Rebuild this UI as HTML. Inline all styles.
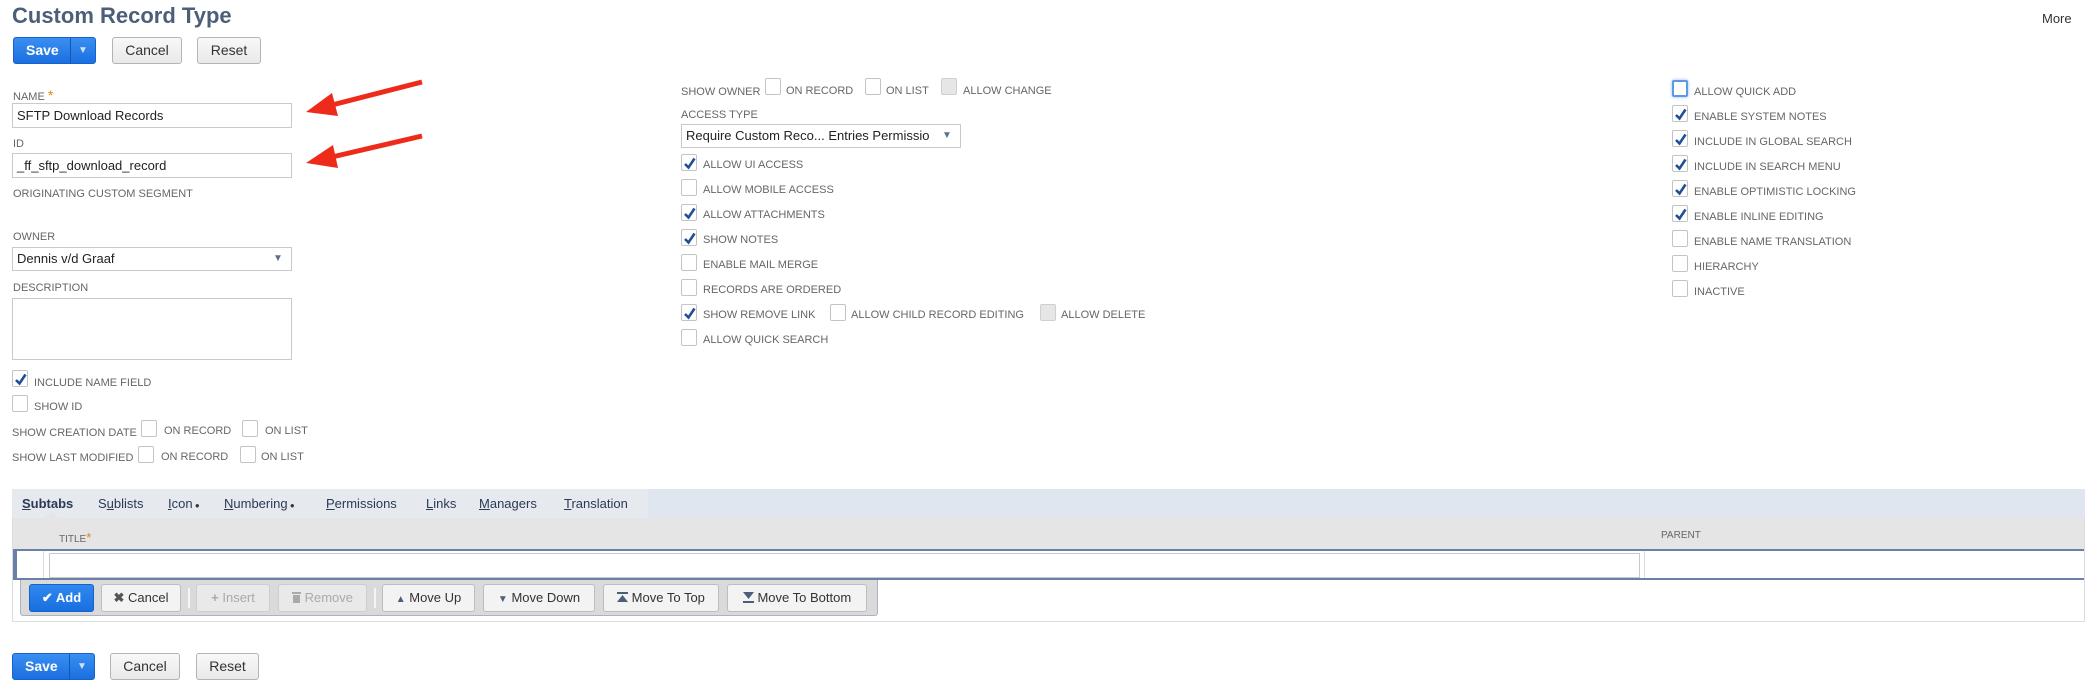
<!DOCTYPE html>
<html><head><meta charset="utf-8"><style>
*{box-sizing:border-box;margin:0;padding:0}
body{width:2100px;height:691px;background:#fff;position:relative;overflow:hidden;font-family:"Liberation Sans",Arial,sans-serif}
.a{position:absolute;white-space:nowrap}
.l{position:absolute;white-space:nowrap;font-size:11px;line-height:14px;color:#666}
.cb{position:absolute;width:16px;height:17px;border:1px solid #c4c4c4;background:#fff;border-radius:2px}
.cb.g{background:#e6e6e6;border-color:#cfcfcf}
.cb svg{position:absolute;left:0;top:0}
.inp{position:absolute;border:1px solid #c9c9c9;background:#fff;font-size:13px;color:#222;padding-left:4px}
.btn{position:absolute;height:27px;border:1px solid #b4b4b4;border-radius:3px;background:linear-gradient(#f8f8f8,#e9e9e9);font-size:14px;color:#333;text-align:center;line-height:25px}
.save{position:absolute;height:27px;border:1px solid #1763c9;border-radius:3px;background:linear-gradient(#3a8ff2,#1b6fe0);color:#fff;font-weight:bold;font-size:14px;line-height:25px}
.save .dv{position:absolute;top:0;bottom:0;width:1px;background:#1556b0}
.save .ar{position:absolute;top:0;color:#cfe0fb;font-size:10px}
.tb{position:absolute;top:584px;height:28px;border:1px solid #bdbdbd;border-radius:3px;background:#f3f3f3;font-size:13px;color:#333;line-height:26px;text-align:center}
.tb.d{color:#aaa;background:#e9e9e9;border-color:#cdcdcd}
.tab{position:absolute;top:496px;font-size:13px;color:#2a3a55;line-height:16px}
.tab u{text-decoration:underline}
</style></head><body>

<div class="a" style="left:12px;top:3px;font-size:22px;font-weight:bold;color:#4d5e78;line-height:26px">Custom Record Type</div>
<div class="a" style="left:2042px;top:11px;font-size:13px;color:#333">More</div>

<div class="save" style="left:13px;top:37px;width:83px"><span style="position:absolute;left:12px">Save</span><div class="dv" style="left:56px"></div><span class="ar" style="left:64px">&#9660;</span></div>
<div class="btn" style="left:112px;top:37px;width:70px">Cancel</div>
<div class="btn" style="left:197px;top:37px;width:64px">Reset</div>

<!-- left column -->
<div class="l" style="left:13px;top:88px">NAME <span style="color:#e08a00;font-size:14px">*</span></div>
<div class="inp" style="left:12px;top:103px;width:280px;height:25px;line-height:23px">SFTP Download Records</div>
<div class="l" style="left:13px;top:137px">ID</div>
<div class="inp" style="left:12px;top:153px;width:280px;height:25px;line-height:23px">_ff_sftp_download_record</div>
<div class="l" style="left:13px;top:187px">ORIGINATING CUSTOM SEGMENT</div>
<div class="l" style="left:13px;top:230px">OWNER</div>
<div class="inp" style="left:12px;top:247px;width:280px;height:24px;line-height:22px">Dennis v/d Graaf<span style="position:absolute;left:260px;top:0;color:#5c6f8e;font-size:10px">&#9660;</span></div>
<div class="l" style="left:13px;top:281px">DESCRIPTION</div>
<div class="inp" style="left:12px;top:298px;width:280px;height:62px"></div>

<div class="cb" style="left:12px;top:370px"><svg width="16" height="17"><path d="M3 9 L6.5 12.5 L12.5 3.5" stroke="#1f4f96" stroke-width="2.6" fill="none"/></svg></div>
<div class="l" style="left:34px;top:376px">INCLUDE NAME FIELD</div>
<div class="cb" style="left:12px;top:395px"></div>
<div class="l" style="left:34px;top:400px">SHOW ID</div>
<div class="l" style="left:12px;top:426px">SHOW CREATION DATE</div>
<div class="cb" style="left:141px;top:420px"></div><div class="l" style="left:164px;top:424px">ON RECORD</div>
<div class="cb" style="left:242px;top:420px"></div><div class="l" style="left:265px;top:424px">ON LIST</div>
<div class="l" style="left:12px;top:451px">SHOW LAST MODIFIED</div>
<div class="cb" style="left:138px;top:446px"></div><div class="l" style="left:161px;top:450px">ON RECORD</div>
<div class="cb" style="left:240px;top:446px"></div><div class="l" style="left:261px;top:450px">ON LIST</div>

<!-- arrows -->
<svg class="a" style="left:0;top:0" width="500" height="200">
<line x1="422" y1="82" x2="332" y2="105" stroke="#ee2a1a" stroke-width="5"/>
<polygon points="306,112 338,116 332,93" fill="#ee2a1a"/>
<line x1="422" y1="136" x2="332" y2="157" stroke="#ee2a1a" stroke-width="5"/>
<polygon points="306,163 338,168 333,145" fill="#ee2a1a"/>
</svg>

<!-- middle column -->
<div class="l" style="left:681px;top:85px">SHOW OWNER</div>
<div class="cb" style="left:765px;top:78px"></div><div class="l" style="left:786px;top:84px">ON RECORD</div>
<div class="cb" style="left:865px;top:78px"></div><div class="l" style="left:886px;top:84px">ON LIST</div>
<div class="cb g" style="left:941px;top:78px"></div><div class="l" style="left:963px;top:84px">ALLOW CHANGE</div>
<div class="l" style="left:681px;top:108px">ACCESS TYPE</div>
<div class="inp" style="left:681px;top:124px;width:280px;height:24px;line-height:22px">Require Custom Reco... Entries Permissio<span style="position:absolute;left:260px;top:0;color:#5c6f8e;font-size:10px">&#9660;</span></div>

<div class="cb" style="left:681px;top:154px"><svg width="16" height="17"><path d="M3 9 L6.5 12.5 L12.5 3.5" stroke="#1f4f96" stroke-width="2.6" fill="none"/></svg></div><div class="l" style="left:703px;top:158px">ALLOW UI ACCESS</div>
<div class="cb" style="left:681px;top:179px"></div><div class="l" style="left:703px;top:183px">ALLOW MOBILE ACCESS</div>
<div class="cb" style="left:681px;top:204px"><svg width="16" height="17"><path d="M3 9 L6.5 12.5 L12.5 3.5" stroke="#1f4f96" stroke-width="2.6" fill="none"/></svg></div><div class="l" style="left:703px;top:208px">ALLOW ATTACHMENTS</div>
<div class="cb" style="left:681px;top:229px"><svg width="16" height="17"><path d="M3 9 L6.5 12.5 L12.5 3.5" stroke="#1f4f96" stroke-width="2.6" fill="none"/></svg></div><div class="l" style="left:703px;top:233px">SHOW NOTES</div>
<div class="cb" style="left:681px;top:254px"></div><div class="l" style="left:703px;top:258px">ENABLE MAIL MERGE</div>
<div class="cb" style="left:681px;top:279px"></div><div class="l" style="left:703px;top:283px">RECORDS ARE ORDERED</div>
<div class="cb" style="left:681px;top:304px"><svg width="16" height="17"><path d="M3 9 L6.5 12.5 L12.5 3.5" stroke="#1f4f96" stroke-width="2.6" fill="none"/></svg></div><div class="l" style="left:703px;top:308px">SHOW REMOVE LINK</div>
<div class="cb" style="left:830px;top:304px"></div><div class="l" style="left:851px;top:308px">ALLOW CHILD RECORD EDITING</div>
<div class="cb g" style="left:1040px;top:304px"></div><div class="l" style="left:1061px;top:308px">ALLOW DELETE</div>
<div class="cb" style="left:681px;top:329px"></div><div class="l" style="left:703px;top:333px">ALLOW QUICK SEARCH</div>

<!-- right column -->
<div class="cb" style="left:1672px;top:80px;border:2px solid #5b9be6;box-shadow:0 0 3px #8fbdf2"></div><div class="l" style="left:1694px;top:85px">ALLOW QUICK ADD</div>
<div class="cb" style="left:1672px;top:105px"><svg width="16" height="17"><path d="M3 9 L6.5 12.5 L12.5 3.5" stroke="#1f4f96" stroke-width="2.6" fill="none"/></svg></div><div class="l" style="left:1694px;top:110px">ENABLE SYSTEM NOTES</div>
<div class="cb" style="left:1672px;top:130px"><svg width="16" height="17"><path d="M3 9 L6.5 12.5 L12.5 3.5" stroke="#1f4f96" stroke-width="2.6" fill="none"/></svg></div><div class="l" style="left:1694px;top:135px">INCLUDE IN GLOBAL SEARCH</div>
<div class="cb" style="left:1672px;top:155px"><svg width="16" height="17"><path d="M3 9 L6.5 12.5 L12.5 3.5" stroke="#1f4f96" stroke-width="2.6" fill="none"/></svg></div><div class="l" style="left:1694px;top:160px">INCLUDE IN SEARCH MENU</div>
<div class="cb" style="left:1672px;top:180px"><svg width="16" height="17"><path d="M3 9 L6.5 12.5 L12.5 3.5" stroke="#1f4f96" stroke-width="2.6" fill="none"/></svg></div><div class="l" style="left:1694px;top:185px">ENABLE OPTIMISTIC LOCKING</div>
<div class="cb" style="left:1672px;top:205px"><svg width="16" height="17"><path d="M3 9 L6.5 12.5 L12.5 3.5" stroke="#1f4f96" stroke-width="2.6" fill="none"/></svg></div><div class="l" style="left:1694px;top:210px">ENABLE INLINE EDITING</div>
<div class="cb" style="left:1672px;top:230px"></div><div class="l" style="left:1694px;top:235px">ENABLE NAME TRANSLATION</div>
<div class="cb" style="left:1672px;top:255px"></div><div class="l" style="left:1694px;top:260px">HIERARCHY</div>
<div class="cb" style="left:1672px;top:280px"></div><div class="l" style="left:1694px;top:285px">INACTIVE</div>

<!-- subtab area -->
<div class="a" style="left:12px;top:489px;width:2073px;height:133px;border:1px solid #dcdcdc;border-top:none"></div>
<div class="a" style="left:12px;top:489px;width:2073px;height:29px;background:#dfe6ef"></div>
<div class="a" style="left:12px;top:489px;width:636px;height:29px;background:#e6e9ee"></div>
<div class="tab" style="left:22px;font-weight:bold"><u>S</u>ubtabs</div>
<div class="tab" style="left:98px">S<u>u</u>blists</div>
<div class="tab" style="left:168px"><u>I</u>con<span style="font-size:8px"> &#9679;</span></div>
<div class="tab" style="left:224px"><u>N</u>umbering<span style="font-size:8px"> &#9679;</span></div>
<div class="tab" style="left:326px"><u>P</u>ermissions</div>
<div class="tab" style="left:426px"><u>L</u>inks</div>
<div class="tab" style="left:479px"><u>M</u>anagers</div>
<div class="tab" style="left:564px"><u>T</u>ranslation</div>
<div class="a" style="left:44px;top:512px;width:0;height:0;border-left:7px solid transparent;border-right:7px solid transparent;border-bottom:6px solid #e5e5e5"></div>

<div class="a" style="left:13px;top:518px;width:2071px;height:31px;background:#e5e5e5"></div>
<div class="a" style="left:59px;top:530px;font-size:10px;color:#666">TITLE<span style="color:#e08a00;font-size:13px">*</span></div>
<div class="a" style="left:1661px;top:530px;font-size:10px;color:#666">PARENT</div>

<div class="a" style="left:13px;top:549px;width:2071px;height:31px;background:#fff;border-top:2px solid #6a80a8;border-bottom:2px solid #6a80a8"></div>
<div class="a" style="left:13px;top:549px;width:4px;height:31px;background:#6a80a8"></div>
<div class="a" style="left:43px;top:551px;width:1px;height:27px;background:#ddd"></div>
<div class="inp" style="left:49px;top:553px;width:1591px;height:25px"></div>
<div class="a" style="left:1644px;top:551px;width:1px;height:27px;background:#ddd"></div>

<div class="a" style="left:20px;top:580px;width:858px;height:36px;background:#dadada;border:1px solid #a9b3c4;border-top:none;border-radius:0 0 3px 3px"></div>
<div class="tb" style="left:29px;width:65px;background:linear-gradient(#2f88ef,#1a6fe0);border-color:#1763c9;color:#fff;font-weight:bold">&#10004; Add</div>
<div class="tb" style="left:101px;width:80px"><b style="color:#555">&#10006;</b> Cancel</div>
<div class="a" style="left:188px;top:588px;width:2px;height:20px;background:#f4f4f4"></div>
<div class="tb d" style="left:196px;width:74px"><b>+</b> Insert</div>
<div class="tb d" style="left:278px;width:89px"><svg width="9" height="12" style="vertical-align:-1px"><rect x="0" y="1" width="9" height="2" fill="#aaa"/><rect x="1" y="4" width="7" height="8" fill="#aaa"/></svg> Remove</div>
<div class="a" style="left:374px;top:588px;width:2px;height:20px;background:#f4f4f4"></div>
<div class="tb" style="left:382px;width:93px"><span style="font-size:10px;color:#4d5e78">&#9650;</span> Move Up</div>
<div class="tb" style="left:483px;width:112px"><span style="font-size:10px;color:#4d5e78">&#9660;</span> Move Down</div>
<div class="tb" style="left:603px;width:116px"><svg width="11" height="11" style="vertical-align:-1px"><rect x="0" y="0" width="11" height="2" fill="#4d5e78"/><polygon points="5.5,3 11,10 0,10" fill="#4d5e78"/></svg> Move To Top</div>
<div class="tb" style="left:727px;width:140px"><svg width="11" height="11" style="vertical-align:-1px"><polygon points="0,0 11,0 5.5,7" fill="#4d5e78"/><rect x="0" y="9" width="11" height="2" fill="#4d5e78"/></svg> Move To Bottom</div>

<!-- bottom buttons -->
<div class="save" style="left:12px;top:653px;width:83px"><span style="position:absolute;left:12px">Save</span><div class="dv" style="left:56px"></div><span class="ar" style="left:64px">&#9660;</span></div>
<div class="btn" style="left:110px;top:653px;width:70px">Cancel</div>
<div class="btn" style="left:196px;top:653px;width:63px">Reset</div>
</body></html>
